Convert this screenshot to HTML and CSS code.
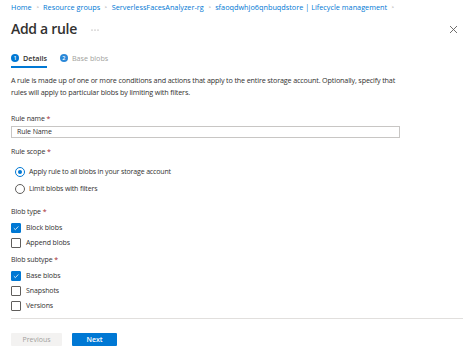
FILE: index.html
```html
<!DOCTYPE html>
<html>
<head>
<meta charset="utf-8">
<link rel="stylesheet" href="styles.css">
</head>
<body>
<div class="page">
  <nav class="crumbs">
    <a>Home</a><span class="sep">&gt;</span>
    <a>Resource groups</a><span class="sep">&gt;</span>
    <a>ServerlessFacesAnalyzer-rg</a><span class="sep">&gt;</span>
    <a>sfaoqdwhjo6qnbuqdstore | Lifecycle management</a><span class="sep">&gt;</span>
  </nav>
  <header class="titlebar">
    <h1 class="title">Add a rule</h1>
    <span class="more">
      <svg width="8" height="4" viewBox="0 0 8 4"><circle cx="1" cy="2" r="0.6" fill="#8a8886"/><circle cx="4" cy="2" r="0.6" fill="#8a8886"/><circle cx="7" cy="2" r="0.6" fill="#8a8886"/></svg>
    </span>
    <span class="close">
      <svg width="9" height="9" viewBox="0 0 9 9"><path d="M1 1L8 8M8 1L1 8" stroke="#605e5c" stroke-width="0.9"/></svg>
    </span>
  </header>
  <div class="tabs">
    <div class="tab active"><span class="num">1</span>Details</div>
    <div class="tab"><span class="num">2</span>Base blobs</div>
  </div>
  <p class="intro">A rule is made up of one or more conditions and actions that apply to the entire storage account. Optionally, specify that rules will apply to particular blobs by limiting with filters.</p>

  <div class="field name">
    <div class="label">Rule name <span class="req">*</span></div>
    <div class="input">Rule Name</div>
  </div>

  <div class="field scope">
    <div class="label">Rule scope <span class="req">*</span></div>
    <div class="radios">
      <div class="radio checked"><span class="dot"></span>Apply rule to all blobs in your storage account</div>
      <div class="radio"><span class="dot"></span>Limit blobs with filters</div>
    </div>
  </div>

  <div class="field type">
    <div class="label">Blob type <span class="req">*</span></div>
    <div class="checks">
      <div class="check on"><span class="box"><svg viewBox="0 0 10 10"><path d="M2.3 5.2L4.2 7.1L7.9 3.1" fill="none" stroke="#fff" stroke-width="1"/></svg></span>Block blobs</div>
      <div class="check"><span class="box"></span>Append blobs</div>
    </div>
  </div>

  <div class="field subtype">
    <div class="label">Blob subtype <span class="req">*</span></div>
    <div class="checks">
      <div class="check on"><span class="box"><svg viewBox="0 0 10 10"><path d="M2.3 5.2L4.2 7.1L7.9 3.1" fill="none" stroke="#fff" stroke-width="1"/></svg></span>Base blobs</div>
      <div class="check"><span class="box"></span>Snapshots</div>
      <div class="check"><span class="box"></span>Versions</div>
    </div>
  </div>

  <div class="footer">
    <button class="btn prev">Previous</button>
    <button class="btn next">Next</button>
  </div>
</div>
</body>
</html>
```
FILE: styles.css
```css
html, body {
  margin: 0;
  padding: 0;
  background: #fff;
}
body {
  font-family: "Segoe UI", "Open Sans", "Noto Sans", sans-serif;
  color: #323130;
  width: 474px;
  height: 363px;
  overflow: hidden;
}
.page {
  padding: 0 11px;
}
.crumbs {
  height: 14px;
  display: flex;
  align-items: center;
  font-size: 7.3px;
  color: #0078d4;
  white-space: nowrap;
}
.crumbs a {
  color: #0078d4;
}
.crumbs .sep {
  color: #8a8886;
  font-size: 6px;
  margin: 0 4px;
  transform: scaleX(0.7);
  display: inline-block;
}
.titlebar {
  display: flex;
  align-items: center;
  height: 22px;
  margin-top: 4px;
}
.title {
  margin: 0;
  font-size: 14px;
  letter-spacing: -0.3px;
  font-weight: 600;
  color: #323130;
  line-height: 22px;
}
.more {
  display: flex;
  margin-left: 14px;
  margin-top: 1px;
}
.close {
  margin-left: auto;
  margin-right: 5px;
  display: flex;
}
.tabs {
  display: flex;
  align-items: flex-start;
  gap: 13px;
  margin-top: 11px;
  height: 17px;
}
.tab {
  display: flex;
  align-items: flex-start;
  font-size: 7.2px;
  color: #a19f9d;
  line-height: 10px;
  padding-top: 2px;
  box-sizing: border-box;
  height: 17px;
}
.tab.active {
  color: #323130;
  font-weight: 600;
  border-bottom: 2px solid #0078d4;
}
.tab .num {
  width: 8px;
  height: 8px;
  border-radius: 50%;
  background: #0078d4;
  color: #fff;
  font-size: 5.5px;
  line-height: 8px;
  text-align: center;
  margin-right: 4px;
  margin-top: 1px;
  font-weight: 600;
}
.tab:not(.active) .num {
  background: #2b88d8;
}
.intro {
  margin: 6px 0 0;
  font-size: 7.2px;
  letter-spacing: -0.15px;
  line-height: 12px;
  max-width: 395px;
  color: #323130;
}
.label {
  font-size: 7px;
  letter-spacing: -0.1px;
  line-height: 12px;
  color: #323130;
}
.field.name { margin-top: 15px; }
.field.scope { margin-top: 8px; }
.field.type { margin-top: 9px; }
.field.subtype { margin-top: 4px; }
.req {
  color: #a4262c;
}
.input {
  margin-top: 1px;
  width: 389px;
  height: 12px;
  box-sizing: border-box;
  border: 1px solid #c8c6c4;
  font-size: 7px;
  letter-spacing: -0.1px;
  line-height: 10px;
  padding-left: 5px;
}
.radios {
  padding-top: 5px;
}
.radio {
  display: flex;
  align-items: center;
  height: 17px;
  font-size: 7px;
  letter-spacing: -0.15px;
  padding-left: 4px;
}
.radio .dot {
  width: 10px;
  height: 10px;
  border: 1px solid #605e5c;
  border-radius: 50%;
  box-sizing: border-box;
  margin-right: 4px;
  position: relative;
}
.radio.checked .dot {
  border-color: #0078d4;
}
.radio.checked .dot::after {
  content: "";
  position: absolute;
  left: 2px;
  top: 2px;
  width: 4px;
  height: 4px;
  border-radius: 50%;
  background: #0078d4;
}
.checks {
  padding-top: 2px;
}
.check {
  display: flex;
  align-items: center;
  height: 15px;
  font-size: 7px;
  letter-spacing: -0.1px;
}
.check .box {
  width: 10px;
  height: 10px;
  border: 1px solid #605e5c;
  border-radius: 1px;
  box-sizing: border-box;
  margin-right: 5px;
  display: flex;
}
.check.on .box {
  background: #0078d4;
  border-color: #0078d4;
}
.check .box svg {
  width: 8px;
  height: 8px;
}
.footer {
  margin-top: 5px;
  border-top: 1px solid #e1dfdd;
  padding-top: 14px;
  display: flex;
  gap: 10px;
}
.btn {
  height: 13px;
  border: none;
  font-family: inherit;
  font-size: 7px;
  padding: 0;
  border-radius: 1px;
}
.btn.prev {
  width: 51px;
  background: #f3f2f1;
  color: #a19f9d;
}
.btn.next {
  width: 45px;
  background: #0078d4;
  color: #fff;
  font-weight: 600;
}
```
